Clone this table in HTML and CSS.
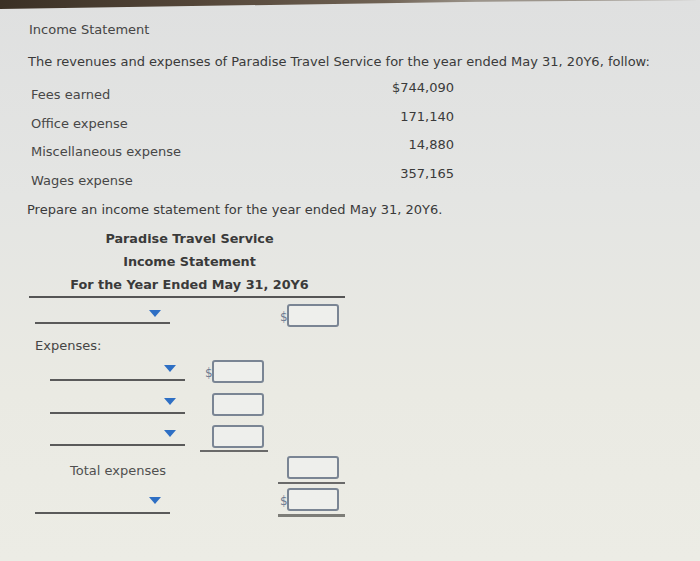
FILE: index.html
```html
<!DOCTYPE html>
<html lang="en">
<head>
<meta charset="utf-8">
<title>Income Statement</title>
<link rel="stylesheet" href="styles.css">
</head>
<body>
<div class="edge"></div>
<main class="page">
  <h1 class="title">Income Statement</h1>
  <p class="intro">The revenues and expenses of Paradise Travel Service for the year ended May 31, 20Y6, follow:</p>
  <div class="data">
    <div class="drow"><span class="dlabel">Fees earned</span><span class="dval">$744,090</span></div>
    <div class="drow"><span class="dlabel">Office expense</span><span class="dval">171,140</span></div>
    <div class="drow"><span class="dlabel">Miscellaneous expense</span><span class="dval">14,880</span></div>
    <div class="drow"><span class="dlabel">Wages expense</span><span class="dval">357,165</span></div>
  </div>
  <p class="prompt">Prepare an income statement for the year ended May 31, 20Y6.</p>
  <section class="stmt">
    <header class="stmt-head">
      <div>Paradise Travel Service</div>
      <div>Income Statement</div>
      <div>For the Year Ended May 31, 20Y6</div>
    </header>

    <div class="row r-rev">
      <div class="c1"><div class="sel sel-a"><svg class="arrow" viewBox="0 0 12 7" width="12" height="7"><path d="M0 0H12L6 7Z"/></svg></div></div>
      <div class="c2"></div>
      <div class="c3"><span class="dollar">$</span><span class="box"></span></div>
    </div>

    <div class="row r-lab"><div class="exp-label">Expenses:</div></div>

    <div class="row r-exp">
      <div class="c1"><div class="sel sel-b"><svg class="arrow" viewBox="0 0 12 7" width="12" height="7"><path d="M0 0H12L6 7Z"/></svg></div></div>
      <div class="c2"><span class="dollar">$</span><span class="box"></span></div>
      <div class="c3"></div>
    </div>
    <div class="row r-exp r-mid">
      <div class="c1"><div class="sel sel-b"><svg class="arrow" viewBox="0 0 12 7" width="12" height="7"><path d="M0 0H12L6 7Z"/></svg></div></div>
      <div class="c2"><span class="dollar"></span><span class="box"></span></div>
      <div class="c3"></div>
    </div>
    <div class="row r-exp r-last">
      <div class="c1"><div class="sel sel-b"><svg class="arrow" viewBox="0 0 12 7" width="12" height="7"><path d="M0 0H12L6 7Z"/></svg></div></div>
      <div class="c2 under"><span class="dollar"></span><span class="box"></span></div>
      <div class="c3"></div>
    </div>

    <div class="row r-tot">
      <div class="c1"><span class="tot-label">Total expenses</span></div>
      <div class="c2"></div>
      <div class="c3 under"><span class="dollar"></span><span class="box"></span></div>
    </div>

    <div class="row r-net">
      <div class="c1"><div class="sel sel-a"><svg class="arrow" viewBox="0 0 12 7" width="12" height="7"><path d="M0 0H12L6 7Z"/></svg></div></div>
      <div class="c2"></div>
      <div class="c3 double"><span class="dollar">$</span><span class="box"></span></div>
    </div>
  </section>
</main>
</body>
</html>
```

FILE: styles.css
```css
html, body {
  margin: 0;
  padding: 0;
}

body {
  min-height: 561px;
  background: linear-gradient(180deg, #dfe0e0 0%, #e4e5e3 35%, #eaeae3 70%, #ecece5 100%);
  font-family: "DejaVu Sans", Verdana, sans-serif;
  font-size: 13px;
  line-height: 16px;
  color: #3f3f3f;
}

.edge {
  height: 9px;
  background: linear-gradient(90deg, #3a3025 0%, #55473a 30%, #6f6254 55%, #9c958c 68%);
  clip-path: polygon(0 0, 100% 0, 100% 0, 66% 2px, 0 9px);
}

.page {
  padding: 13px 0 0 28px;
}

.title {
  margin: 0 0 0 1px;
  font-size: 13px;
  font-weight: normal;
  line-height: 16px;
  color: #454545;
}

.intro {
  margin: 16px 0 0 0;
  color: #3a3a3a;
}

.data {
  margin: 10px 0 0 3px;
  width: 423px;
}

.drow {
  display: flex;
  justify-content: space-between;
  align-items: flex-start;
  height: 28.5px;
}

.dlabel {
  padding-top: 7px;
  color: #474747;
}

.dval {
  color: #3a3a3a;
}

.prompt {
  margin: 8px 0 0 -1px;
  color: #3a3a3a;
}

.stmt {
  margin: 9px 0 0 1px;
  width: 316px;
}

.stmt-head {
  text-align: center;
  font-weight: bold;
  font-size: 12.8px;
  line-height: 23px;
  color: #3a3a3a;
  border-bottom: 2px solid #555;
  padding-left: 5px;
}

.row {
  display: flex;
  align-items: flex-start;
}

.c1 {
  width: 171px;
  flex: none;
}

.c2 {
  width: 68px;
  margin-right: 10px;
  flex: none;
  display: flex;
  align-items: center;
  padding-left: 5px;
  box-sizing: border-box;
}

.c3 {
  width: 67px;
  flex: none;
  display: flex;
  align-items: center;
  padding-left: 2px;
  box-sizing: border-box;
}

.sel {
  width: 135px;
  border-bottom: 2px solid #5a5a5a;
  display: flex;
  justify-content: flex-end;
  align-items: flex-start;
  box-sizing: border-box;
  padding-right: 9px;
}

.sel-a {
  margin-left: 6px;
}

.sel-b {
  margin-left: 21px;
  height: 21px;
  padding-top: 5px;
}

.arrow {
  display: block;
  fill: #2e6fc4;
}

.dollar {
  width: 7px;
  flex: none;
  font-size: 12px;
  line-height: 14px;
  color: #6f7c92;
  margin-top: 2px;
}

.box {
  display: block;
  width: 52px;
  height: 23px;
  box-sizing: border-box;
  border: 2px solid #7a8594;
  border-radius: 3px;
  background: #eeefec;
}

/* revenue row */
.r-rev {
  height: 38px;
  padding-top: 6px;
  box-sizing: border-box;
}

.r-rev .sel-a {
  height: 20px;
  padding-top: 6px;
}

.r-lab {
  height: 24px;
}

.exp-label {
  margin-left: 6px;
  padding-top: 2px;
  color: #454545;
}

.r-exp {
  height: 33px;
}

.r-mid {
  height: 32px;
}

.r-last {
  height: 31px;
}

.under {
  border-bottom: 2px solid #6a6a6a;
  padding-bottom: 2px;
}

.r-tot {
  height: 32px;
}

.tot-label {
  display: block;
  margin: 7px 0 0 41px;
  color: #505050;
}

.r-tot .c3 {
  padding-bottom: 3px;
}

.r-net {
  height: 40px;
}

.r-net .c3 {
  padding-bottom: 3px;
}

.r-net .sel-a {
  height: 26px;
  padding-top: 9px;
}

.double {
  border-bottom: 3px solid #7d7d78;
}
```
